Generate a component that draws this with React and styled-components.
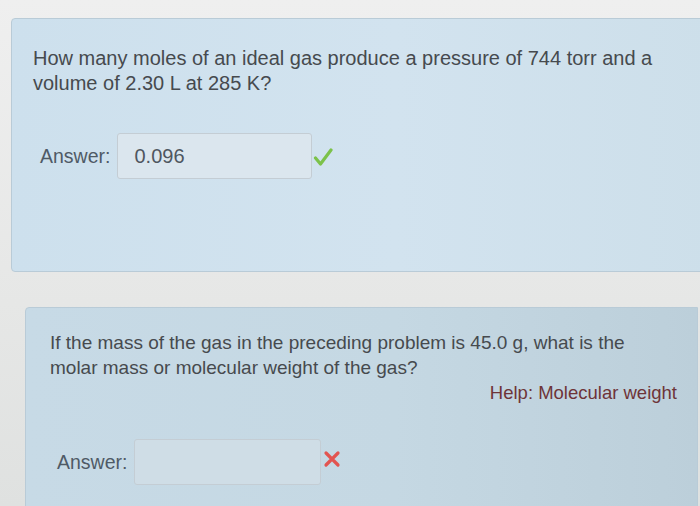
import React from "react";
import styled, { createGlobalStyle } from "styled-components";

const Global = createGlobalStyle`
  html, body {
    margin: 0;
    padding: 0;
    width: 700px;
    height: 506px;
    overflow: hidden;
    background: linear-gradient(180deg, #efefef 0%, #e6e7e6 60%, #dfe1e0 100%);
    font-family: "Liberation Sans", Arial, sans-serif;
  }
`;

const Page = styled.main`
  display: flex;
  flex-direction: column;
  padding-top: 18px;
`;

const Card = styled.section`
  margin-left: ${(p) => p.$indent}px;
  margin-top: ${(p) => p.$top || 0}px;
  width: ${(p) => p.$width}px;
  height: ${(p) => p.$height}px;
  box-sizing: border-box;
  padding: ${(p) => p.$pad};
  border-radius: 4px 0 0 4px;
  border: 1px solid #b9cbd7;
  background: ${(p) => p.$bg};
  display: flex;
  flex-direction: column;
`;

const Question = styled.p`
  margin: 0;
  font-size: ${(p) => p.$size}px;
  line-height: 25px;
  color: #464a4e;
`;

const HelpLink = styled.a`
  align-self: flex-end;
  margin-top: 2px;
  margin-right: 20px;
  font-size: 18.5px;
  color: #6e3438;
  text-decoration: none;
`;

const AnswerRow = styled.div`
  display: flex;
  align-items: center;
  margin-top: ${(p) => p.$top}px;
  margin-left: ${(p) => p.$indent}px;
`;

const Label = styled.span`
  font-size: 19.5px;
  color: #4f5a66;
  margin-right: 7px;
`;

const Input = styled.div`
  box-sizing: border-box;
  width: ${(p) => p.$width}px;
  height: 46px;
  border: 1px solid #c4cdd4;
  border-radius: 3px;
  background: ${(p) => p.$bg};
  padding-left: 16px;
  display: flex;
  align-items: center;
  font-size: 20px;
  color: #4f5660;
`;

const Mark = styled.span`
  display: flex;
  margin-left: 1px;
  margin-top: ${(p) => p.$drop}px;
`;

export default function App() {
  return (
    <Page>
      <Global />
      <Card
        $indent={11}
        $width={700}
        $height={254}
        $pad="27px 0 0 21px"
        $bg="linear-gradient(90deg, #cde0ed 0%, #d2e3ef 55%, #cddfea 100%)"
      >
        <Question $size={20}>
          How many moles of an ideal gas produce a pressure of 744 torr and a
          <br />
          volume of 2.30 L at 285 K?
        </Question>
        <AnswerRow $top={37} $indent={7}>
          <Label>Answer:</Label>
          <Input $width={195} $bg="#dbe6ee">0.096</Input>
          <Mark $drop={2}>
            <svg width="20" height="20" viewBox="0 0 20 20">
              <path
                d="M2.5 11 L7.5 17 L18 3"
                fill="none"
                stroke="#7cc24a"
                strokeWidth="3.2"
                strokeLinecap="round"
                strokeLinejoin="round"
              />
            </svg>
          </Mark>
        </AnswerRow>
      </Card>
      <Card
        $indent={25}
        $top={35}
        $width={673}
        $height={220}
        $pad="22px 0 0 24px"
        $bg="linear-gradient(90deg, #c7dae6 0%, #c5d8e3 55%, #bccfda 100%)"
      >
        <Question $size={19}>
          If the mass of the gas in the preceding problem is 45.0 g, what is the
          <br />
          molar mass or molecular weight of the gas?
        </Question>
        <HelpLink href="#">Help: Molecular weight</HelpLink>
        <AnswerRow $top={35} $indent={7}>
          <Label>Answer:</Label>
          <Input $width={187} $bg="#cfdde6" />
          <Mark $drop={-6}>
            <svg width="20" height="20" viewBox="0 0 20 20">
              <path
                d="M4 4 L16 16 M16 4 L4 16"
                fill="none"
                stroke="#e25450"
                strokeWidth="3.2"
                strokeLinecap="round"
              />
            </svg>
          </Mark>
        </AnswerRow>
      </Card>
    </Page>
  );
}
